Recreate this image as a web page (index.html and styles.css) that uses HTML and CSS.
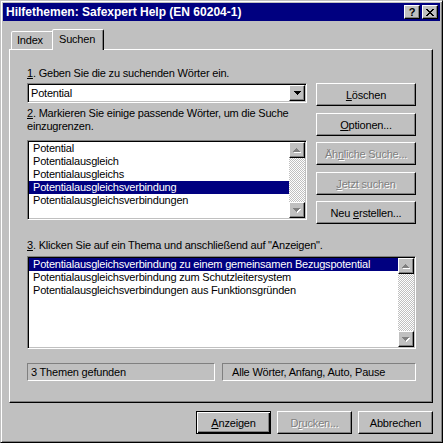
FILE: index.html
```html
<!DOCTYPE html>
<html lang="de">
<head>
<meta charset="utf-8">
<title>Hilfethemen</title>
<link rel="stylesheet" href="styles.css">
</head>
<body>
<div class="window">
  <div class="titlebar">
    <span class="title">Hilfethemen: Safexpert Help (EN 60204-1)</span>
    <div class="tbtns">
      <span class="tbtn help">?</span>
      <span class="tbtn close"><svg width="8" height="7" viewBox="0 0 8 7" shape-rendering="crispEdges"><path fill="#000" d="M0 0h2v1H0zM6 0h2v1H6zM1 1h2v1H1zM5 1h2v1H5zM2 2h4v1H2zM3 3h2v1H3zM2 4h4v1H2zM1 5h2v1H1zM5 5h2v1H5zM0 6h2v1H0zM6 6h2v1H6z"/></svg></span>
    </div>
  </div>
  <div class="client">
    <div class="tabs">
      <div class="tab">Index</div>
      <div class="tab active">Suchen</div>
    </div>
    <div class="panel">
      <div class="top">
        <div class="leftcol">
          <div class="label"><u>1</u>. Geben Sie die zu suchenden Wörter ein.</div>
          <div class="combo">
            <span class="combo-text">Potential</span>
            <span class="sbtn"><svg width="7" height="4" viewBox="0 0 7 4" shape-rendering="crispEdges"><path fill="#000" d="M0 0h7v1H0zM1 1h5v1H1zM2 2h3v1H2zM3 3h1v1H3z"/></svg></span>
          </div>
          <div class="label lab2"><u>2</u>. Markieren Sie einige passende Wörter, um die Suche<br>einzugrenzen.</div>
          <div class="listbox list2">
            <ul class="items">
              <li>Potential</li>
              <li>Potentialausgleich</li>
              <li>Potentialausgleichs</li>
              <li class="sel">Potentialausgleichsverbindung</li>
              <li>Potentialausgleichsverbindungen</li>
            </ul>
            <div class="scrollbar">
              <span class="sbtn"><svg width="8" height="5" viewBox="0 0 8 5" shape-rendering="crispEdges"><path fill="#fff" d="M4 1h1v1H4zM3 2h3v1H3zM2 3h5v1H2zM1 4h7v1H1z"/><path fill="#808080" d="M3 0h1v1H3zM2 1h3v1H2zM1 2h5v1H1zM0 3h7v1H0z"/></svg></span>
              <span class="track"></span>
              <span class="sbtn"><svg width="8" height="5" viewBox="0 0 8 5" shape-rendering="crispEdges"><path fill="#fff" d="M1 1h7v1H1zM2 2h5v1H2zM3 3h3v1H3zM4 4h1v1H4z"/><path fill="#808080" d="M0 0h7v1H0zM1 1h5v1H1zM2 2h3v1H2zM3 3h1v1H3z"/></svg></span>
            </div>
          </div>
        </div>
        <div class="rightcol">
          <div class="btn"><span><u>L</u>öschen</span></div>
          <div class="btn"><span><u>O</u>ptionen...</span></div>
          <div class="btn dis"><span>Äh<u>n</u>liche Suche...</span></div>
          <div class="btn dis"><span><u>J</u>etzt suchen</span></div>
          <div class="btn"><span>Neu <u>e</u>rstellen...</span></div>
        </div>
      </div>
      <div class="label lab3"><u>3</u>. Klicken Sie auf ein Thema und anschließend auf "Anzeigen".</div>
      <div class="listbox list3">
        <ul class="items">
          <li class="sel">Potentialausgleichsverbindung zu einem gemeinsamen Bezugspotential</li>
          <li>Potentialausgleichsverbindung zum Schutzleitersystem</li>
          <li>Potentialausgleichsverbindungen aus Funktionsgründen</li>
        </ul>
        <div class="scrollbar">
          <span class="sbtn"><svg width="8" height="5" viewBox="0 0 8 5" shape-rendering="crispEdges"><path fill="#fff" d="M4 1h1v1H4zM3 2h3v1H3zM2 3h5v1H2zM1 4h7v1H1z"/><path fill="#808080" d="M3 0h1v1H3zM2 1h3v1H2zM1 2h5v1H1zM0 3h7v1H0z"/></svg></span>
          <span class="track"></span>
          <span class="sbtn"><svg width="8" height="5" viewBox="0 0 8 5" shape-rendering="crispEdges"><path fill="#fff" d="M1 1h7v1H1zM2 2h5v1H2zM3 3h3v1H3zM4 4h1v1H4z"/><path fill="#808080" d="M0 0h7v1H0zM1 1h5v1H1zM2 2h3v1H2zM3 3h1v1H3z"/></svg></span>
        </div>
      </div>
      <div class="status">
        <div class="sbox s1">3 Themen gefunden</div>
        <div class="sbox s2">Alle Wörter, Anfang, Auto, Pause</div>
      </div>
    </div>
    <div class="footer">
      <div class="btn fbtn default"><span><u>A</u>nzeigen</span></div>
      <div class="btn fbtn dis"><span>D<u>r</u>ucken...</span></div>
      <div class="btn fbtn"><span>Abbrechen</span></div>
    </div>
  </div>
</div>
</body>
</html>
```
FILE: styles.css
```css
* { box-sizing: border-box; }
html, body { margin: 0; padding: 0; }
body {
  background: #c0c0c0;
  font-family: "Liberation Sans", Arial, sans-serif;
  font-size: 11px;
  letter-spacing: -0.2px;
  color: #000;
}
.window {
  width: 443px;
  height: 443px;
  background: #c0c0c0;
  border: 1px solid;
  border-color: #c0c0c0 #000 #000 #c0c0c0;
  box-shadow: inset 1px 1px #fff, inset -1px -1px #808080;
  padding: 2px;
  display: flex;
  flex-direction: column;
}
.titlebar {
  height: 18px;
  flex: none;
  background: #000080;
  color: #fff;
  display: flex;
  align-items: center;
  padding-left: 3px;
}
.title {
  flex: 1;
  font-weight: bold;
  font-size: 12px;
  letter-spacing: 0;
  white-space: nowrap;
}
.tbtns { display: flex; gap: 2px; margin-right: 2px; }
.tbtn {
  width: 16px;
  height: 14px;
  background: #c0c0c0;
  border: 1px solid;
  border-color: #fff #000 #000 #fff;
  box-shadow: inset -1px -1px #808080;
  display: flex;
  align-items: center;
  justify-content: center;
  color: #000;
  font-weight: bold;
  font-size: 11px;
  letter-spacing: 0;
  line-height: 12px;
}
.client {
  flex: 1;
  padding: 8px 7px 0 6px;
  display: flex;
  flex-direction: column;
}
.tabs {
  height: 20px;
  flex: none;
  display: flex;
  align-items: flex-start;
  position: relative;
  z-index: 1;
  padding-left: 2px;
}
.tab {
  margin-top: 2px;
  height: 18px;
  width: 43px;
  background: #c0c0c0;
  border: 1px solid;
  border-bottom: none;
  border-color: #fff #000 transparent #fff;
  border-radius: 2px 2px 0 0;
  box-shadow: inset -1px 0 #808080;
  padding-left: 5px;
  line-height: 17px;
}
.tab.active {
  margin-top: 0;
  margin-left: -2px;
  height: 21px;
  width: 52px;
  padding-left: 6px;
  line-height: 18px;
}
.panel {
  height: 354px;
  flex: none;
  border: 1px solid;
  border-color: #fff #000 #000 #fff;
  box-shadow: inset -1px -1px #808080;
  padding: 17px 16px 0 17px;
}
.top { display: flex; gap: 9px; }
.leftcol { width: 280px; }
.rightcol {
  width: 100px;
  padding-top: 16px;
  display: flex;
  flex-direction: column;
}
.rightcol .btn + .btn { margin-top: 7px; }
.rightcol .btn:nth-child(3), .rightcol .btn:nth-child(5) { margin-top: 6px; }
.label { line-height: 13px; white-space: nowrap; }
.lab2 { margin-top: 4px; }
.lab3 { margin-top: 15px; }
.combo, .listbox {
  background: #fff;
  border: 1px solid;
  border-color: #808080 #fff #fff #808080;
  box-shadow: inset 1px 1px #000, inset -1px -1px #c0c0c0;
  padding: 1px;
  display: flex;
}
.combo { margin-top: 3px; height: 20px; }
.combo-text { flex: 1; padding-left: 2px; line-height: 16px; }
.sbtn {
  width: 16px;
  height: 16px;
  flex: none;
  background: #c0c0c0;
  border: 1px solid;
  border-color: #fff #000 #000 #fff;
  box-shadow: inset -1px -1px #808080;
  display: flex;
  align-items: center;
  justify-content: center;
}
.list2 { margin-top: 7px; height: 80px; }
.list3 { margin-top: 4px; height: 93px; }
.items {
  flex: 1;
  list-style: none;
  margin: 0;
  padding: 0;
  overflow: hidden;
}
.items li {
  line-height: 13px;
  height: 13px;
  padding-left: 4px;
  white-space: nowrap;
}
.items li.sel { background: #000080; color: #fff; }
.scrollbar {
  width: 16px;
  flex: none;
  display: flex;
  flex-direction: column;
}
.track {
  flex: 1;
  background-color: #fff;
  background-image: conic-gradient(#c0c0c0 25%, #fff 0 50%, #c0c0c0 0 75%, #fff 0);
  background-size: 2px 2px;
}
.btn {
  height: 23px;
  background: #c0c0c0;
  border: 1px solid;
  border-color: #fff #000 #000 #fff;
  box-shadow: inset -1px -1px #808080;
  display: flex;
  align-items: center;
  justify-content: center;
  white-space: nowrap;
}
.btn.dis { color: #808080; text-shadow: 1px 1px #fff; }
.btn.default {
  border-color: #000;
  box-shadow: inset 1px 1px #fff, inset -1px -1px #000, inset -2px -2px #808080;
}
.status { margin-top: 14px; display: flex; gap: 7px; }
.sbox {
  height: 18px;
  flex: 1;
  border: 1px solid;
  border-color: #808080 #fff #fff #808080;
  line-height: 16px;
  white-space: nowrap;
}
.s1 { padding-left: 3px; }
.s2 { padding-left: 9px; }
.footer {
  display: flex;
  justify-content: flex-end;
  gap: 6px;
  margin-top: 8px;
}
.fbtn { width: 75px; }
```
